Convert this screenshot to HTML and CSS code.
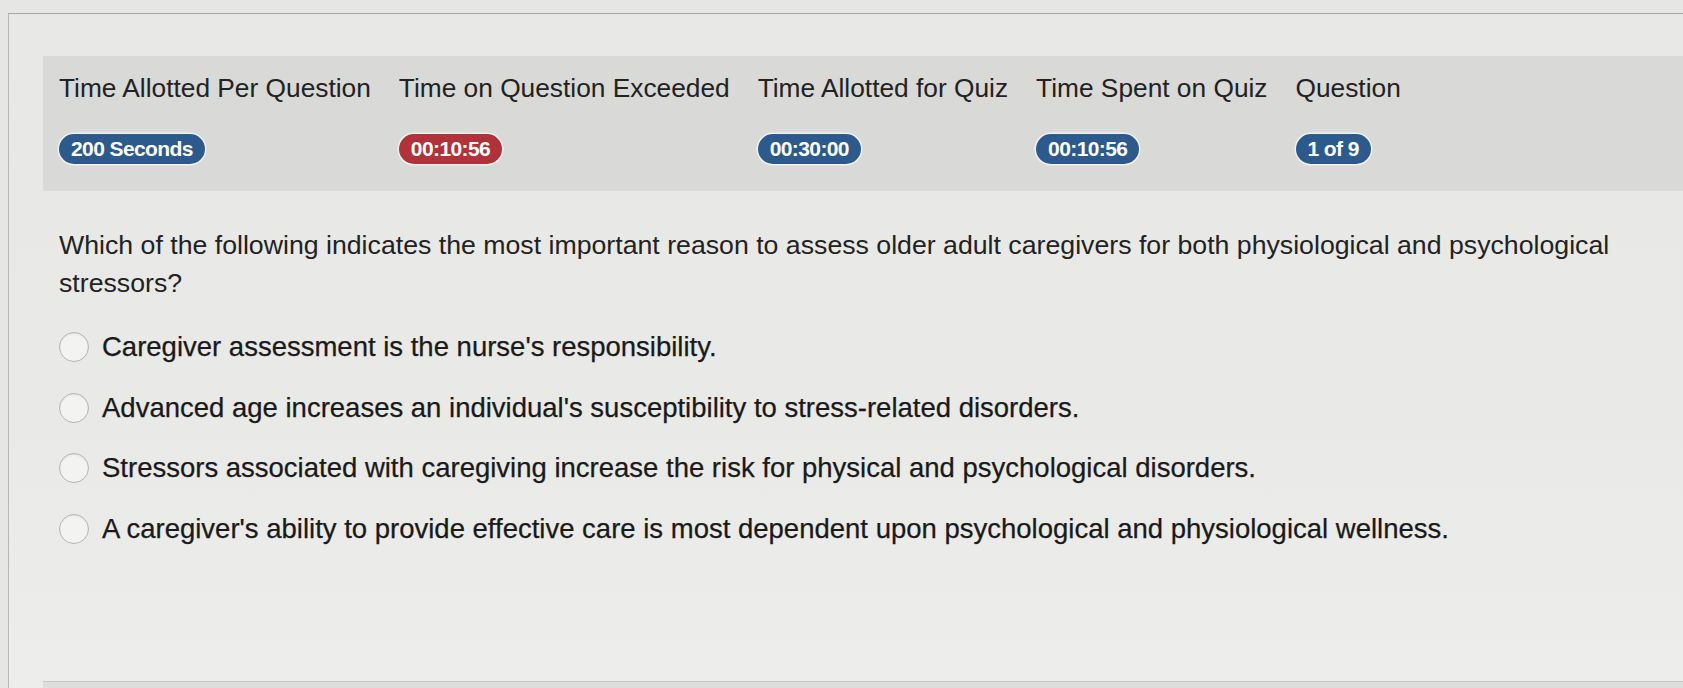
FILE: index.html
```html
<!DOCTYPE html>
<html lang="en">
<head>
<meta charset="utf-8">
<title>Quiz</title>
<link rel="stylesheet" href="styles.css">
</head>
<body>
<div class="frame">
  <div class="panel">
    <div class="stat">
      <div class="stat-label">Time Allotted Per Question</div>
      <span class="badge">200 Seconds</span>
    </div>
    <div class="stat">
      <div class="stat-label">Time on Question Exceeded</div>
      <span class="badge badge-red">00:10:56</span>
    </div>
    <div class="stat">
      <div class="stat-label">Time Allotted for Quiz</div>
      <span class="badge">00:30:00</span>
    </div>
    <div class="stat">
      <div class="stat-label">Time Spent on Quiz</div>
      <span class="badge">00:10:56</span>
    </div>
    <div class="stat">
      <div class="stat-label">Question</div>
      <span class="badge">1 of 9</span>
    </div>
  </div>

  <div class="question">
    <p class="question-text">Which of the following indicates the most important reason to assess older adult caregivers for both physiological and psychological stressors?</p>
    <ul class="options">
      <li class="option"><span class="radio"></span><span class="option-text">Caregiver assessment is the nurse's responsibility.</span></li>
      <li class="option"><span class="radio"></span><span class="option-text">Advanced age increases an individual's susceptibility to stress-related disorders.</span></li>
      <li class="option"><span class="radio"></span><span class="option-text">Stressors associated with caregiving increase the risk for physical and psychological disorders.</span></li>
      <li class="option"><span class="radio"></span><span class="option-text">A caregiver's ability to provide effective care is most dependent upon psychological and physiological wellness.</span></li>
    </ul>
  </div>
  <div class="footer"></div>
</div>
</body>
</html>
```

FILE: styles.css
```css
* { box-sizing: border-box; }

html, body {
  margin: 0;
  height: 100%;
  overflow: hidden;
}

body {
  background: #e6e6e4;
  font-family: "Liberation Sans", Arial, Helvetica, sans-serif;
  color: #1f1f1f;
}

.frame {
  margin: 13px 0 0 8px;
  height: 675px;
  border-top: 1px solid #a8a8a6;
  border-left: 1px solid #b8b8b6;
  background: linear-gradient(180deg, #e8e8e6 0%, #e9e9e7 60%, #ededeb 100%);
  padding: 42px 0 0 34px;
  display: flex;
  flex-direction: column;
}

.panel {
  background: #d9d9d7;
  height: 135px;
  padding: 14px 16px 0 16px;
  display: flex;
  gap: 28px;
}

.stat {
  display: flex;
  flex-direction: column;
  align-items: flex-start;
  gap: 28px;
}

.stat-label {
  font-size: 26.3px;
  line-height: 36px;
  color: #222;
  white-space: nowrap;
}

.badge {
  display: inline-block;
  height: 30px;
  line-height: 30px;
  padding: 0 12px;
  border-radius: 15px;
  background: #2c5a8c;
  color: #fff;
  font-weight: bold;
  font-size: 21px;
  letter-spacing: -0.6px;
  box-shadow: 0 0 0 1.5px #f1f1ef;
}

.badge-red {
  background: #b1323a;
}

.question {
  padding: 0 16px;
}

.question-text {
  margin: 36px 0 0 0;
  font-size: 26.7px;
  line-height: 37.5px;
  max-width: 1600px;
  color: #222;
}

.options {
  list-style: none;
  margin: 27px 0 0 0;
  padding: 0;
  display: flex;
  flex-direction: column;
  gap: 24.5px;
}

.option {
  display: flex;
  align-items: center;
  gap: 13px;
  height: 36px;
}

.radio {
  flex: none;
  width: 30px;
  height: 30px;
  border-radius: 50%;
  border: 1.5px solid #b5b5b3;
  background: #f3f3f1;
  box-shadow: inset 0 1px 2px rgba(0,0,0,0.08);
}

.option-text {
  font-size: 27.5px;
  color: #1a1a1a;
  white-space: nowrap;
  -webkit-text-stroke: 0.25px #1a1a1a;
}

.footer {
  margin-top: auto;
  height: 7px;
  border-top: 1px solid #c8c8c6;
  background: #dededc;
}
```
